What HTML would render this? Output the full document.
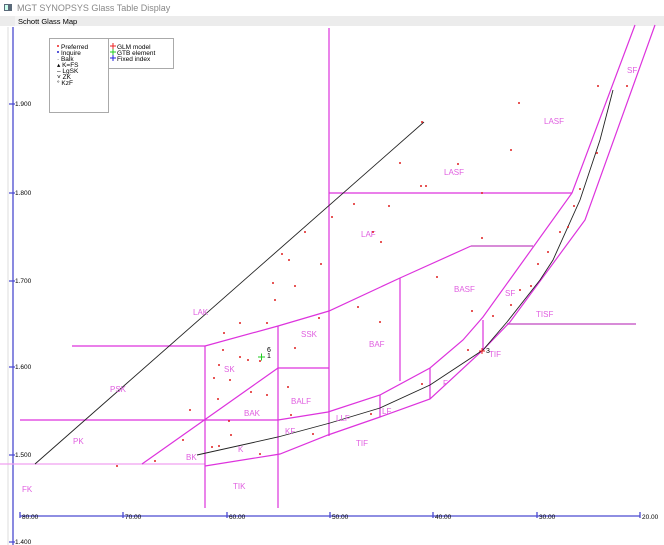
<!DOCTYPE html>
<html><head><meta charset="utf-8"><style>
body{margin:0;width:664px;height:545px;overflow:hidden;background:#fff;font-family:"Liberation Sans",sans-serif}
svg{position:absolute;left:0;top:0}
</style></head><body>
<svg width="664" height="545" viewBox="0 0 664 545" xmlns="http://www.w3.org/2000/svg" font-family="Liberation Sans, sans-serif">
<rect x="0" y="0" width="664" height="16" fill="#fff"/>
<rect x="4" y="4" width="8" height="7" fill="#5a6a7a"/><rect x="5" y="5" width="3" height="5" fill="#cfe"/>
<text x="17" y="11" font-size="9" fill="#888">MGT SYNOPSYS Glass Table Display</text>
<rect x="0" y="16" width="664" height="10" fill="#ececec"/>
<rect x="15" y="16" width="53" height="10" fill="#f4f4f4"/>
<text x="18" y="24" font-size="7.5" fill="#000">Schott Glass Map</text>
<line x1="8" y1="27" x2="8" y2="545" stroke="#ddd"/>
<!-- axes -->
<g stroke="#4a4ad0" stroke-width="1.3" fill="none">
<line x1="13" y1="27" x2="13" y2="545"/>
<line x1="20" y1="516" x2="640" y2="516"/>
<path d="M9 104h6M9 193h6M9 281h6M9 367h6M9 455h6M9 542h6"/>
<path d="M20 512v6M123 512v6M227 512v6M330 512v6M433 512v6M537 512v6M640 512v6"/>
</g>
<g font-size="6.5" fill="#000">
<text x="15" y="106">1.900</text><text x="15" y="195">1.800</text><text x="15" y="283">1.700</text>
<text x="15" y="369">1.600</text><text x="15" y="457">1.500</text><text x="15" y="544">1.400</text>
<text x="22" y="519">80.00</text><text x="125" y="519">70.00</text><text x="229" y="519">60.00</text>
<text x="332" y="519">50.00</text><text x="435" y="519">40.00</text><text x="539" y="519">30.00</text><text x="642" y="519">20.00</text>
</g>
<!-- legend -->
<rect x="49.5" y="38.5" width="59" height="74" fill="#fff" stroke="#aaa"/>
<rect x="108.5" y="38.5" width="65" height="30" fill="#fff" stroke="#aaa"/>
<g font-size="6.5" fill="#000">
<circle cx="58" cy="46" r="1" fill="#e22"/><text x="61" y="49">Preferred</text>
<circle cx="58" cy="52" r="1" fill="#22c"/><text x="61" y="55">Inquire</text>
<text x="57" y="61">· Balk</text><text x="57" y="67">▴ K=FS</text><text x="57" y="73">– LgSK</text>
<text x="57" y="79">˅ ZK</text><text x="57" y="85">° KzF</text>
<text x="117" y="49">GLM model</text><text x="117" y="55">GTB element</text><text x="117" y="61">Fixed index</text>
</g>
<g fill="none" stroke-width="1"><path d="M110 46h6M113 43v6" stroke="#e22"/><path d="M110 52h6M113 49v6" stroke="#2c2"/><path d="M110 58h6M113 55v6" stroke="#22d"/></g>
<!-- regions -->
<line x1="0" y1="464" x2="205" y2="464" stroke="#f0a0f0" stroke-width="1.3"/>
<g stroke="#dd33dd" stroke-width="1.2" fill="none">
<line x1="20" y1="420" x2="278" y2="420"/>
<line x1="72" y1="346" x2="205" y2="346"/>
<line x1="205" y1="346" x2="205" y2="508"/>
<line x1="278" y1="326" x2="278" y2="508"/>
<line x1="329" y1="28" x2="329" y2="436"/>
<line x1="278" y1="368" x2="329" y2="368"/>
<line x1="329" y1="193" x2="572" y2="193"/>
<line x1="400" y1="278" x2="400" y2="381"/>
<line x1="380" y1="395" x2="380" y2="417"/>
<line x1="430" y1="368" x2="430" y2="399"/>
<line x1="483" y1="320" x2="483" y2="350"/>
<polyline points="205,346 278,326 329,311 400,278 471,246"/>
<line x1="471" y1="246" x2="533" y2="246" stroke="#cc66cc" stroke-width="1.5"/>
<line x1="507" y1="324" x2="636" y2="324" stroke="#cc66cc" stroke-width="1.5"/>
<line x1="142" y1="464" x2="278" y2="368"/>
<polyline points="278,420 328,412 380,395 430,368 463,340 483,317 572,193 635,25"/>
<polyline points="205,466 274,455 280,454 328,435 380,417 430,399 483,350 510,322 585,220 655,25"/>
</g>
<g stroke="#222" stroke-width="0.9" fill="none">
<line x1="35" y1="464" x2="424" y2="122"/>
<path d="M197 455 L278 437 L330 423 L380 408 L430 385 L483 350 L507 322 L540 280 L553 260 L580 200 L600 140 L613 90"/>
</g>
<!-- labels -->
<g font-size="8" fill="#e060e0">
<text x="627" y="73">SF</text><text x="544" y="124">LASF</text><text x="444" y="175">LASF</text>
<text x="361" y="237">LAF</text><text x="454" y="292">BASF</text><text x="505" y="296">SF</text>
<text x="536" y="317">TISF</text><text x="193" y="315">LAK</text><text x="301" y="337">SSK</text>
<text x="369" y="347">BAF</text><text x="224" y="372">SK</text><text x="489" y="357">TIF</text>
<text x="110" y="392">PSK</text><text x="443" y="386">F</text><text x="291" y="404">BALF</text>
<text x="244" y="416">BAK</text><text x="382" y="414">LF</text><text x="336" y="421">LLF</text>
<text x="285" y="434">KF</text><text x="73" y="444">PK</text><text x="238" y="452">K</text>
<text x="356" y="446">TIF</text><text x="186" y="460">BK</text><text x="22" y="492">FK</text><text x="233" y="489">TIK</text>
</g>
<g font-size="7" fill="#000"><text x="267" y="352">6</text><text x="267" y="358">1</text><text x="486" y="353">3</text></g>
<g stroke="#2c2" stroke-width="1"><path d="M258 357h7M261.5 353.5v7"/></g>
<g stroke="#e22" stroke-width="1"><path d="M479 351h6M482 348v6"/></g>
<!-- dots -->
<g fill="#e02020">
<circle cx="519" cy="103" r="1"/><circle cx="627" cy="86" r="1"/><circle cx="511" cy="150" r="1"/>
<circle cx="458" cy="164" r="1"/><circle cx="400" cy="163" r="1"/><circle cx="421" cy="186" r="1"/><circle cx="426" cy="186" r="1"/>
<circle cx="482" cy="193" r="1"/><circle cx="354" cy="204" r="1"/><circle cx="389" cy="206" r="1"/>
<circle cx="332" cy="217" r="1"/><circle cx="373" cy="232" r="1"/><circle cx="381" cy="242" r="1"/>
<circle cx="482" cy="238" r="1"/><circle cx="437" cy="277" r="1"/><circle cx="358" cy="307" r="1"/><circle cx="380" cy="322" r="1"/>
<circle cx="472" cy="311" r="1"/><circle cx="598" cy="86" r="1"/><circle cx="597" cy="153" r="1"/><circle cx="580" cy="189" r="1"/>
<circle cx="574" cy="206" r="1"/><circle cx="568" cy="227" r="1"/><circle cx="560" cy="232" r="1"/><circle cx="548" cy="252" r="1"/>
<circle cx="538" cy="264" r="1"/><circle cx="531" cy="286" r="1"/><circle cx="520" cy="290" r="1"/><circle cx="511" cy="305" r="1"/>
<circle cx="493" cy="316" r="1"/><circle cx="468" cy="350" r="1"/><circle cx="422" cy="384" r="1"/><circle cx="371" cy="414" r="1"/>
<circle cx="305" cy="232" r="1"/><circle cx="282" cy="254" r="1"/><circle cx="289" cy="260" r="1"/><circle cx="273" cy="283" r="1"/>
<circle cx="295" cy="286" r="1"/><circle cx="275" cy="300" r="1"/><circle cx="321" cy="264" r="1"/>
<circle cx="240" cy="323" r="1"/><circle cx="267" cy="323" r="1"/><circle cx="224" cy="333" r="1"/><circle cx="319" cy="318" r="1"/>
<circle cx="223" cy="350" r="1"/><circle cx="240" cy="357" r="1"/><circle cx="248" cy="360" r="1"/><circle cx="260" cy="361" r="1"/>
<circle cx="219" cy="365" r="1"/><circle cx="295" cy="348" r="1"/><circle cx="214" cy="378" r="1"/><circle cx="230" cy="380" r="1"/>
<circle cx="251" cy="392" r="1"/><circle cx="218" cy="399" r="1"/><circle cx="267" cy="395" r="1"/><circle cx="288" cy="387" r="1"/>
<circle cx="291" cy="415" r="1"/><circle cx="190" cy="410" r="1"/><circle cx="229" cy="421" r="1"/><circle cx="183" cy="440" r="1"/>
<circle cx="231" cy="435" r="1"/><circle cx="219" cy="446" r="1"/><circle cx="260" cy="454" r="1"/><circle cx="313" cy="434" r="1"/>
<circle cx="155" cy="461" r="1"/><circle cx="117" cy="466" r="1"/><circle cx="212" cy="447" r="1"/><circle cx="422" cy="122" r="1"/>
</g>
</svg>
</body></html>
